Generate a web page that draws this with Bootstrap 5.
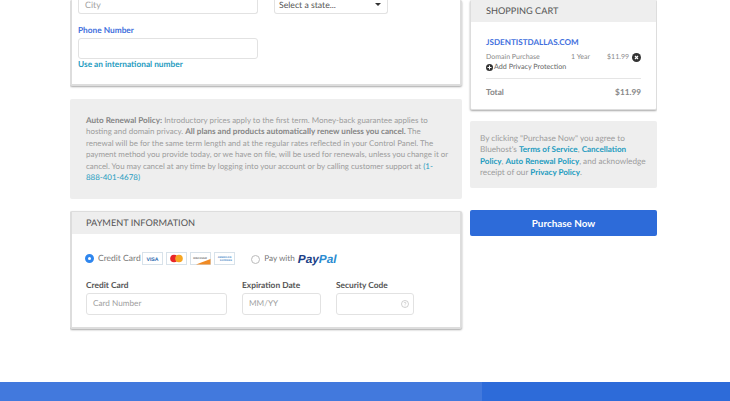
<!DOCTYPE html>
<html lang="en">
<head>
<meta charset="utf-8">
<title>Checkout</title>
<link rel="stylesheet" href="https://cdn.jsdelivr.net/npm/bootstrap@5.3.0/dist/css/bootstrap.min.css">
<style>
html,body{height:401px;overflow:hidden;background:#fff}
body{font-family:Lato,"Liberation Sans",sans-serif;color:#777;font-size:9px;line-height:1.2;text-rendering:geometricPrecision}
.shell{width:587px;margin-left:70px;height:382px;overflow:hidden}
.leftcol{width:392px}
.rightcol{width:187px}
.panel{background:#fff;border:2px solid #ddd;border-top-width:1px;box-shadow:0 1px 2px rgba(0,0,0,.35);border-radius:2px}
.addr{height:86px;border-top:0;padding:0 6px;margin-bottom:13px}
.fld{height:21px;border:1px solid #e2e2e2;border-radius:3px;background:#fff;padding:0 6px;display:flex;align-items:center;font-size:8.2px;color:#a0a0a0}
.cityf{width:180px;height:14px;border-top:0;border-radius:0 0 3px 3px;padding-bottom:4px;font-size:8.8px;line-height:9px}
.statef{width:114px;height:14px;border-top:0;border-radius:0 0 3px 3px;margin-left:16px;color:#555;padding:0 6px 4px 4px;justify-content:space-between;font-size:8.7px;line-height:9px}
.caret{width:0;height:0;border-left:3px solid transparent;border-right:3px solid transparent;border-top:3.5px solid #333}
.phlab{font-weight:700;color:#3f6fdd;font-size:8.3px;margin-top:10px;height:14px;line-height:12px}
.phone{width:180px}
.intl{font-weight:700;color:#1f9cc0;font-size:8.3px;line-height:11px}
.policy{background:#eee;border-radius:2px;height:100px;padding:16px 6px 16px 16px;font-size:7.95px;line-height:11.4px;color:#9c9c9c;margin-bottom:12px}
.policy b{color:#858585;font-weight:700;font-size:8.1px}
.policy a,.agree a{color:#1f9cc0;text-decoration:none}
.agree a{font-weight:700;font-size:8.05px}
.payc{height:118px}
.phead{background:#eee;height:22px;display:flex;align-items:center;padding-left:14px;color:#555;font-size:9.2px}
.opt{padding-top:18px;padding-left:13px;height:45px;font-size:8.5px;color:#777}
.radio-on{width:9px;height:9px;border-radius:50%;background:#fff;border:3px solid #2f86ee;margin-right:4px}
.radio-off{width:9px;height:9px;border-radius:50%;border:1px solid #bbb;margin-right:4px;margin-left:16px}
.payw{font-size:8.2px}
.cardicon{width:21px;height:13px;margin-left:3px;display:block}
.cardicon text{font-family:"Liberation Sans",sans-serif;font-weight:700}
.first{margin-left:1.5px}
.paypal{font-family:"Liberation Sans",sans-serif;font-style:italic;font-weight:700;font-size:11.8px;margin-left:3px;color:#1b3f87}
.paypal span{color:#2a8bd0}
.ccrow{padding:0 14px;gap:15px}
.cclab{color:#555;font-weight:700;font-size:8.35px;height:14px;line-height:12px}
.ccw1{width:141px}.ccw2{width:79px}.ccw3{width:78px}
.ccrow .fld{height:22px}
.qfld{padding-right:4px}
.cart{height:110px;border-top:0;border-width:1px;margin-bottom:11px}
.cart .phead{padding-left:15px;padding-bottom:1px}
.cartbody{padding:14px 15px 0}
.domain{font-weight:700;color:#3f6fdd;font-size:8.1px;line-height:12px;margin-bottom:4px}
.cline{font-size:7px;line-height:10px;color:#888}
.cline .yr{width:36px}
.cx{width:9px;height:9px;display:block;margin-left:3px}
.cadd{font-size:7.2px;line-height:10px;color:#666}
.cadd svg{width:7px;height:7px;margin-right:1px}
.ctot{border-top:1px solid #e5e5e5;margin-top:6px;padding-top:9px;font-weight:700;color:#888;font-size:8.25px}
.agree{background:#eee;border-radius:2px;height:67px;padding:12px 10px;font-size:8.2px;line-height:11.3px;color:#9c9c9c;margin-bottom:22px}
.buy{background:#2d6bd9;color:#fff;font-weight:700;font-size:9.9px;height:26px;border:0;border-radius:2px;width:100%;padding:0}
.foot{height:19px}
.foot-a{width:482px;background:#4279dd}
.foot-b{background:#2d6bd9}
</style>
</head>
<body>
<div class="shell d-flex gap-2">
  <div class="leftcol">
    <div class="panel addr">
      <div class="d-flex">
        <div class="fld cityf">City</div>
        <div class="fld statef"><span>Select a state...</span><span class="caret"></span></div>
      </div>
      <div class="phlab">Phone Number</div>
      <div class="fld phone"></div>
      <div class="intl">Use an international number</div>
    </div>
    <div class="policy"><b>Auto Renewal Policy:</b> Introductory prices apply to the first term. Money-back guarantee applies to<br>hosting and domain privacy. <b>All plans and products automatically renew unless you cancel.</b> The<br>renewal will be for the same term length and at the regular rates reflected in your Control Panel. The<br>payment method you provide today, or we have on file, will be used for renewals, unless you change it or<br>cancel. You may cancel at any time by logging into your account or by calling customer support at <a href="#">(1-<br>888-401-4678)</a></div>
    <div class="panel payc">
      <div class="phead">PAYMENT INFORMATION</div>
      <div class="opt d-flex align-items-start">
        <div class="d-flex align-items-center">
          <span class="radio-on"></span><span>Credit Card</span>
          <svg class="cardicon first" viewBox="0 0 21 13"><rect x=".5" y=".5" width="20" height="12" fill="#fff" stroke="#d8e2ea"/><text x="10.5" y="8.6" font-size="5.2" text-anchor="middle" fill="#2a68b0">VISA</text></svg>
          <svg class="cardicon" viewBox="0 0 21 13"><rect x=".5" y=".5" width="20" height="12" fill="#fff" stroke="#d8e2ea"/><circle cx="8" cy="6.5" r="3.8" fill="#e8262a"/><circle cx="13" cy="6.5" r="3.8" fill="#f6a623"/></svg>
          <svg class="cardicon" viewBox="0 0 21 13"><rect x=".5" y=".5" width="20" height="12" fill="#fff" stroke="#d8e2ea"/><path d="M6 12.5 20.5 12.5 20.5 7Z" fill="#f08a24"/><text x="10" y="6.6" font-size="2.6" text-anchor="middle" fill="#666">DISCOVER</text></svg>
          <svg class="cardicon" viewBox="0 0 21 13"><rect x=".5" y=".5" width="20" height="12" fill="#fff" stroke="#d8e2ea"/><text x="10.5" y="5.6" font-size="2.5" text-anchor="middle" fill="#3f86c6">AMERICAN</text><text x="12" y="9.2" font-size="2.5" text-anchor="middle" fill="#3f86c6">EXPRESS</text></svg>
        </div>
        <div class="d-flex align-items-center">
          <span class="radio-off"></span><span class="payw">Pay with</span><span class="paypal">Pay<span>Pal</span></span>
        </div>
      </div>
      <div class="d-flex ccrow">
        <div class="ccw1"><div class="cclab">Credit Card</div><div class="fld">Card Number</div></div>
        <div class="ccw2"><div class="cclab">Expiration Date</div><div class="fld">MM/YY</div></div>
        <div class="ccw3"><div class="cclab">Security Code</div><div class="fld qfld justify-content-end"><svg width="8" height="8" viewBox="0 0 8 8"><circle cx="4" cy="4" r="3.5" fill="none" stroke="#bbb" stroke-width=".7"/><path d="M3 3.1c.1-1.1 2-1.1 2 0 0 .8-1 .7-1 1.6M4 5.6v.7" fill="none" stroke="#bbb" stroke-width=".6"/></svg></div></div>
      </div>
    </div>
  </div>
  <div class="rightcol">
    <div class="panel cart">
      <div class="phead">SHOPPING CART</div>
      <div class="cartbody">
        <div class="domain">JSDENTISTDALLAS.COM</div>
        <div class="cline d-flex align-items-center">
          <span class="flex-grow-1">Domain Purchase</span><span class="yr">1 Year</span><span>$11.99</span>
          <svg class="cx" viewBox="0 0 9 9"><circle cx="4.5" cy="4.5" r="4.5" fill="#333"/><path d="M3 3l3 3M6 3l-3 3" stroke="#fff" stroke-width="1.2"/></svg>
        </div>
        <div class="cadd d-flex align-items-center"><svg viewBox="0 0 7 7"><circle cx="3.5" cy="3.5" r="3.5" fill="#333"/><path d="M3.5 1.5v4M1.5 3.5h4" stroke="#fff" stroke-width="1"/></svg><span>Add Privacy Protection</span></div>
        <div class="ctot d-flex justify-content-between"><span>Total</span><span>$11.99</span></div>
      </div>
    </div>
    <div class="agree">By clicking "Purchase Now" you agree to Bluehost's <a href="#">Terms of Service</a>, <a href="#">Cancellation Policy</a>, <a href="#">Auto Renewal Policy</a>, and acknowledge receipt of our <a href="#">Privacy Policy</a>.</div>
    <button class="btn buy" type="button">Purchase Now</button>
  </div>
</div>
<div class="foot d-flex"><div class="foot-a"></div><div class="foot-b flex-grow-1"></div></div>
<script src="https://cdn.jsdelivr.net/npm/bootstrap@5.3.0/dist/js/bootstrap.bundle.min.js"></script>
</body>
</html>
